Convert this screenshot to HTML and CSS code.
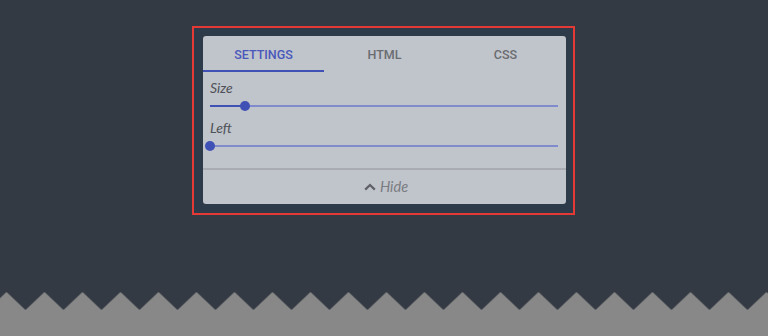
FILE: index.html
```html
<!DOCTYPE html>
<html>
<head>
<meta charset="utf-8">
<link rel="stylesheet" href="styles.css">
</head>
<body>
<div class="page">
  <div class="frame">
    <div class="panel">
      <div class="tabs">
        <div class="tab active">Settings</div>
        <div class="tab">HTML</div>
        <div class="tab">CSS</div>
      </div>
      <div class="content">
        <div class="field">
          <div class="label">Size</div>
          <div class="slider">
            <div class="track"></div>
            <div class="fill" style="width:10%"></div>
            <div class="thumb" style="left:10%"></div>
          </div>
        </div>
        <div class="field">
          <div class="label">Left</div>
          <div class="slider">
            <div class="track"></div>
            <div class="fill" style="width:0%"></div>
            <div class="thumb" style="left:0%"></div>
          </div>
        </div>
      </div>
      <div class="footer">
        <svg class="chev" width="12" height="8" viewBox="0 0 12 8"><path d="M1.2 6.6 L6 2 L10.8 6.6" fill="none" stroke="#5f6166" stroke-width="2.2"/></svg>
        <span class="hide">Hide</span>
      </div>
    </div>
  </div>
  <svg class="zigzag" width="768" height="44" viewBox="0 0 768 44">
    <defs>
      <pattern id="zz" x="-12.5" y="0" width="38" height="44" patternUnits="userSpaceOnUse">
        <polygon points="0,18 19,0 38,18 38,44 0,44" fill="#888888"/>
      </pattern>
    </defs>
    <rect x="0" y="0" width="768" height="44" fill="url(#zz)"/>
  </svg>
</div>
</body>
</html>
```
FILE: styles.css
```css
html, body {
  margin: 0;
  padding: 0;
}
body {
  background: #343a43;
  font-family: "Lato", "Liberation Sans", sans-serif;
}
.page {
  height: 336px;
  display: flex;
  flex-direction: column;
  overflow: hidden;
}
.frame {
  margin: 28px 0 0 calc(50% - 190px);
  width: 363px;
  padding: 8px 7px 9px 9px;
  background: #2c3a4a;
  outline: 2px solid #e53935;
}
.panel {
  background: #c0c4cb;
  border-radius: 3px;
  height: 168px;
  display: flex;
  flex-direction: column;
}
.tabs {
  display: flex;
  height: 36px;
}
.tab {
  flex: 1;
  display: flex;
  align-items: center;
  justify-content: center;
  font-family: "Roboto", "Liberation Sans", sans-serif;
  font-weight: 500;
  font-size: 12.5px;
  text-transform: uppercase;
  color: #6a6c71;
  box-sizing: border-box;
  padding-top: 1px;
}
.tab.active {
  color: #4a58bb;
  border-bottom: 2px solid #3f51b5;
  padding-top: 3px;
}
.content {
  padding: 7px 8px 13px 7px;
  display: flex;
  flex-direction: column;
  gap: 6px;
  flex: 1;
  border-bottom: 2px solid #a9acb2;
}
.label {
  font-style: italic;
  font-size: 14px;
  line-height: 18px;
  color: #4e5157;
}
.slider {
  position: relative;
  height: 16px;
}
.track {
  position: absolute;
  left: 0;
  right: 0;
  top: 8px;
  height: 2px;
  background: #7f8bcc;
}
.fill {
  position: absolute;
  left: 0;
  top: 8px;
  height: 2px;
  background: #3f51b5;
}
.thumb {
  position: absolute;
  top: 4px;
  width: 10px;
  height: 10px;
  margin-left: -5px;
  border-radius: 50%;
  background: #3f51b5;
}
.footer {
  height: 34px;
  display: flex;
  align-items: center;
  justify-content: center;
  gap: 4px;
  padding-left: 3px;
}
.chev {
  display: block;
  margin-top: 0;
}
.hide {
  font-style: italic;
  font-size: 14.5px;
  color: #7a7c82;
  margin-top: -1px;
}
.zigzag {
  display: block;
  margin-top: auto;
}
```
